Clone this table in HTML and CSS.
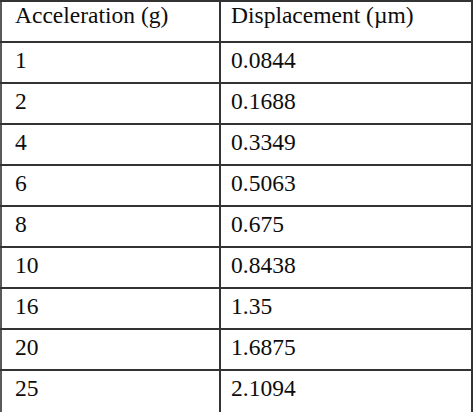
FILE: index.html
```html
<!DOCTYPE html>
<html>
<head>
<meta charset="utf-8">
<link rel="stylesheet" href="styles.css">
</head>
<body>
<table class="data">
  <tr class="head"><td class="c1">Acceleration (g)</td><td class="c2">Displacement (µm)</td></tr>
  <tr><td class="c1">1</td><td class="c2">0.0844</td></tr>
  <tr><td class="c1">2</td><td class="c2">0.1688</td></tr>
  <tr><td class="c1">4</td><td class="c2">0.3349</td></tr>
  <tr><td class="c1">6</td><td class="c2">0.5063</td></tr>
  <tr><td class="c1">8</td><td class="c2">0.675</td></tr>
  <tr><td class="c1">10</td><td class="c2">0.8438</td></tr>
  <tr><td class="c1">16</td><td class="c2">1.35</td></tr>
  <tr><td class="c1">20</td><td class="c2">1.6875</td></tr>
  <tr class="last"><td class="c1">25</td><td class="c2">2.1094</td></tr>
</table>
</body>
</html>
```
FILE: styles.css
```css
html, body {
  margin: 0;
  padding: 0;
  background: #ffffff;
  overflow: hidden;
}
.data {
  border-collapse: collapse;
  width: 473px;
  font-family: "Liberation Serif", "Times New Roman", serif;
  font-size: 23.5px;
  color: #0d0d0d;
}
.data td {
  border: 2px solid #333333;
  height: 41px;
  padding: 4px 0 0 10px;
  vertical-align: top;
  line-height: 26px;
  box-sizing: border-box;
}
.data .head td {
  padding-top: 0;
}
.data .last td {
  height: 46px;
}
.data .c1 {
  width: 219px;
  padding-left: 13px;
  border-left-color: #5a5a5a;
}
```
